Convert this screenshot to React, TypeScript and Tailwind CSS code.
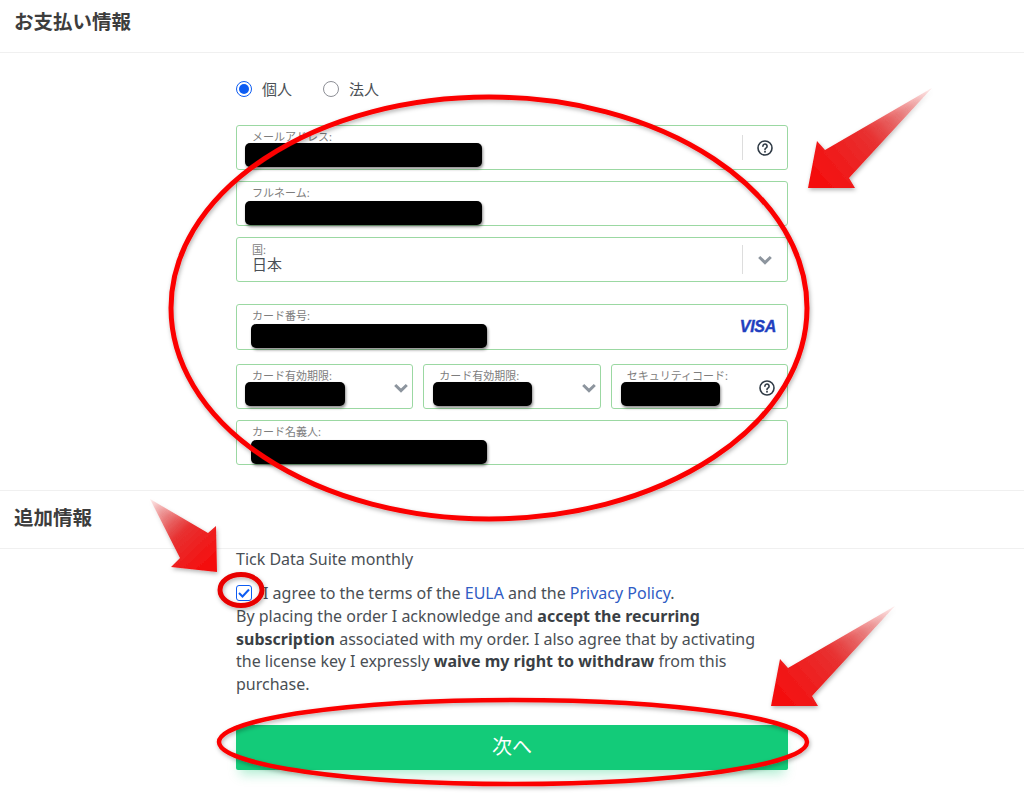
import React from "react";

const font = { fontFamily: '"Noto Sans", "Noto Sans CJK JP", sans-serif' };

function Redact({ w, ml }: { w: string; ml: string }) {
  return <div className={`${w} ${ml} h-6 rounded-[5px] bg-black shadow-[1px_2px_3px_rgba(0,0,0,0.45)]`} />;
}

function Help({ className = "" }: { className?: string }) {
  return (
    <svg viewBox="0 0 16 16" className={`h-4 w-4 shrink-0 ${className}`} fill="none">
      <circle cx="8" cy="8" r="7" stroke="#2f3a45" strokeWidth="1.6" />
      <path d="M5.9 6.2a2.1 2.1 0 1 1 3.3 1.7c-.8.5-1.2.9-1.2 1.7" stroke="#2f3a45" strokeWidth="1.6" strokeLinecap="round" />
      <circle cx="8" cy="11.8" r=".95" fill="#2f3a45" />
    </svg>
  );
}

function Chevron() {
  return (
    <svg viewBox="0 0 14 10" className="h-[10px] w-[14px] shrink-0" fill="none">
      <path d="M1.2 2 7 7.6 12.8 2" stroke="#8d959e" strokeWidth="3" />
    </svg>
  );
}

function Label({ children, className = "ml-[15px]" }: { children: React.ReactNode; className?: string }) {
  return <div className={`h-3 whitespace-nowrap text-[11px] leading-3 text-[#7d7d7d] ${className}`}>{children}</div>;
}

const fieldCls = "flex items-stretch rounded-[3px] border border-[#9bd8a2] bg-white";

function Radio({ on, label }: { on?: boolean; label: string }) {
  return (
    <label className="flex items-center gap-[10px]">
      <span className={`flex h-4 w-4 items-center justify-center rounded-full border ${on ? "border-[#0d5cf2]" : "border-[#8d8f96]"}`}>
        {on && <span className="h-[10px] w-[10px] rounded-full bg-[#0d5cf2]" />}
      </span>
      <span className="text-[15px] leading-5 text-[#4a4f55]">{label}</span>
    </label>
  );
}

function Overlay() {
  const big = "808,188 817,141 825,150 932,88 849,178 855,188";
  const low = "771,706 780,659 788,668 895,606 812,696 818,706";
  return (
    <svg className="pointer-events-none absolute left-0 top-0 h-[812px] w-[1024px]" viewBox="0 0 1024 812" fill="none">
      <defs>
        <filter id="s" x="-10%" y="-10%" width="120%" height="120%">
          <feDropShadow dx="1" dy="2" stdDeviation="2" floodColor="#000" floodOpacity="0.3" />
        </filter>
        <linearGradient id="a1" gradientUnits="userSpaceOnUse" x1="820" y1="180" x2="932" y2="88">
          <stop offset="0" stopColor="#f40f0f" />
          <stop offset="0.45" stopColor="#e83030" />
          <stop offset="1" stopColor="#e83030" stopOpacity="0.08" />
        </linearGradient>
        <linearGradient id="a2" gradientUnits="userSpaceOnUse" x1="783" y1="698" x2="895" y2="606">
          <stop offset="0" stopColor="#f40f0f" />
          <stop offset="0.45" stopColor="#e83030" />
          <stop offset="1" stopColor="#e83030" stopOpacity="0.08" />
        </linearGradient>
        <linearGradient id="a3" gradientUnits="userSpaceOnUse" x1="208" y1="562" x2="150" y2="499">
          <stop offset="0" stopColor="#f40f0f" />
          <stop offset="0.45" stopColor="#e83030" />
          <stop offset="1" stopColor="#e83030" stopOpacity="0.08" />
        </linearGradient>
      </defs>
      <g filter="url(#s)">
        <ellipse cx="489" cy="308" rx="318" ry="211" stroke="#fb0000" strokeWidth="5" />
        <ellipse cx="513" cy="742" rx="294" ry="42" stroke="#fb0000" strokeWidth="4.5" />
        <ellipse cx="241" cy="590" rx="21" ry="15.5" stroke="#e80000" strokeWidth="5" />
        <polygon points={big} fill="url(#a1)" />
        <polygon points={low} fill="url(#a2)" />
        <polygon points="217,572 216,526 208,533 150,499 180,558 171,567" fill="url(#a3)" />
      </g>
    </svg>
  );
}

export default function App() {
  return (
    <div className="relative h-[812px] w-[1024px] overflow-hidden bg-white" style={font}>
      <div className="flex h-[53px] items-start border-b border-[#f0f0f0] pl-[14px] pt-[8px]">
        <h2 className="text-[19.5px] font-bold leading-7 text-[#3d3d3d]">お支払い情報</h2>
      </div>

      <div className="mx-auto w-[552px]">
        <div className="flex h-[72px] items-start gap-[31px] pt-[26px]">
          <Radio on label="個人" />
          <Radio label="法人" />
        </div>

        <div className="flex flex-col gap-[11px]">
          <div className={`${fieldCls} h-[45px]`}>
            <div className="flex-1 pt-[5px]">
              <Label>メールアドレス:</Label>
              <Redact w="w-[237px]" ml="ml-2" />
            </div>
            <div className="my-[9px] w-px bg-[#dddddd]" />
            <div className="flex w-11 items-center justify-center"><Help /></div>
          </div>

          <div className={`${fieldCls} h-[45px]`}>
            <div className="flex-1 pt-[5px]">
              <Label>フルネーム:</Label>
              <div className="pt-[2px]"><Redact w="w-[237px]" ml="ml-2" /></div>
            </div>
          </div>

          <div className={`${fieldCls} h-[45px]`}>
            <div className="flex-1 pt-[6px]">
              <Label>国:</Label>
              <div className="ml-[15px] text-[15px] leading-[17px] text-[#4a4f55]">日本</div>
            </div>
            <div className="my-[7px] w-px bg-[#dddddd]" />
            <div className="flex w-[44px] items-center justify-center"><Chevron /></div>
          </div>
        </div>

        <div className={`${fieldCls} mt-[22px] h-[46px]`}>
          <div className="flex-1 pt-[5px]">
            <Label>カード番号:</Label>
            <div className="pt-[2px]"><Redact w="w-[236px]" ml="ml-[14px]" /></div>
          </div>
          <div className="flex items-center pr-[11px]">
            <span className="text-[16px] font-bold italic leading-none tracking-[-0.3px] text-[#1f3fbf] [-webkit-text-stroke:0.4px_#1f3fbf]" style={{ fontFamily: '"Liberation Sans", sans-serif' }}>VISA</span>
          </div>
        </div>

        <div className="mt-[14px] flex gap-[10px]">
          <div className={`${fieldCls} h-[45px] flex-1`}>
            <div className="flex-1 pt-[5px]">
              <Label>カード有効期限:</Label>
              <div><Redact w="w-[100px]" ml="ml-2" /></div>
            </div>
            <div className="flex items-center pr-[4px] pt-[3px]"><Chevron /></div>
          </div>
          <div className={`${fieldCls} h-[45px] flex-1`}>
            <div className="flex-1 pt-[5px]">
              <Label>カード有効期限:</Label>
              <div><Redact w="w-[99px]" ml="ml-[9px]" /></div>
            </div>
            <div className="flex items-center pr-[4px] pt-[3px]"><Chevron /></div>
          </div>
          <div className={`${fieldCls} h-[45px] flex-1`}>
            <div className="flex-1 pt-[5px]">
              <Label>セキュリティコード:</Label>
              <div><Redact w="w-[99px]" ml="ml-[9px]" /></div>
            </div>
            <div className="flex items-center pr-[12px] pt-[2px]"><Help /></div>
          </div>
        </div>

        <div className={`${fieldCls} mt-[11px] h-[45px]`}>
          <div className="flex-1 pt-[5px]">
            <Label>カード名義人:</Label>
            <div className="pt-[2px]"><Redact w="w-[236px]" ml="ml-[14px]" /></div>
          </div>
        </div>
      </div>

      <div className="mt-[25px] flex h-[59px] items-start border-y border-[#f0f0f0] pl-[14px] pt-[13px]">
        <h2 className="text-[19.5px] font-bold leading-7 text-[#3d3d3d]">追加情報</h2>
      </div>

      <div className="mx-auto w-[552px]">
        <p className="text-[16px] leading-[20px] text-[#4a4f55]">Tick Data Suite monthly</p>
        <div className="mt-[13px] w-[540px] text-[16px] leading-[22.8px] text-[#4a4f55]">
          <div className="flex items-center gap-[11px]">
            <span className="flex h-4 w-4 items-center justify-center rounded-[3px] border border-[#0d5cf2]">
              <svg viewBox="0 0 12 10" className="h-[10px] w-3" fill="none">
                <path d="M1 5l3.5 3.5L11 1.5" stroke="#0d5cf2" strokeWidth="2" />
              </svg>
            </span>
            <span>
              I agree to the terms of the <a className="text-[#2f5cc4]">EULA</a> and the <a className="text-[#2f5cc4]">Privacy Policy</a>.
            </span>
          </div>
          <p>
            By placing the order I acknowledge and <b className="font-bold text-[#3a3f45]">accept the recurring subscription</b> associated with my order. I also agree that by activating the license key I expressly <b className="font-bold text-[#3a3f45]">waive my right to withdraw</b> from this purchase.
          </p>
        </div>
        <button className="mt-[29px] flex h-[45px] w-full items-center justify-center rounded-[2px] bg-[#13cb79] text-[20px] text-white shadow-[0_8px_12px_-4px_rgba(19,203,121,0.35)]">
          次へ
        </button>
      </div>

      <Overlay />
    </div>
  );
}
